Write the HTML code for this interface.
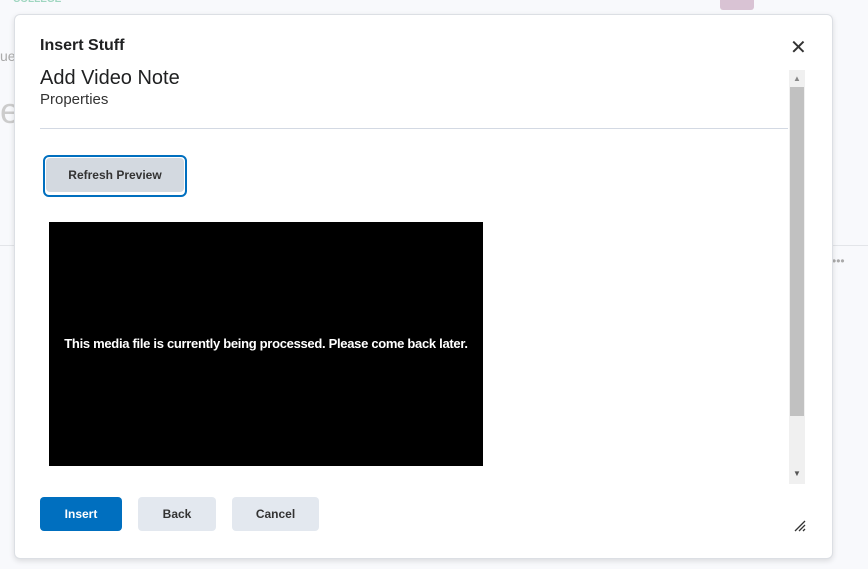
<!DOCTYPE html>
<html><head><style>
html,body{margin:0;width:868px;height:569px;overflow:hidden}
body{background:#f8f9fc;position:relative;font-family:"Liberation Sans",sans-serif;}
.a{position:absolute;white-space:nowrap}
.dlg{left:14px;top:14px;width:817px;height:543px;background:#fff;border:1px solid #dcdfe4;border-radius:6px;box-shadow:0 2px 6px rgba(0,0,0,.12)}
.btn{position:absolute;top:497px;height:34px;border-radius:4px;font-size:12px;font-weight:bold;line-height:34px;text-align:center;color:#333}
</style></head><body>
<div class="a" style="left:13px;top:-6px;font-size:10px;color:#9fd6c0;font-weight:bold">COLLEGE</div>
<div class="a" style="left:720px;top:-5px;width:34px;height:15px;background:#d9c3d4;border-radius:3px"></div>
<div class="a" style="left:0;top:48px;font-size:14px;color:#aaa">ue</div>
<div class="a" style="left:0;top:90px;font-size:36px;color:#ccc">e</div>
<div class="a" style="left:0;top:245px;width:868px;height:1px;background:#e3e5e9"></div>
<div class="a" style="left:832px;top:254px;color:#aaa;font-size:12px">•••</div>
<div class="a dlg"></div>
<div class="a" style="left:40px;top:37px;font-size:16px;font-weight:bold;color:#202122">Insert Stuff</div>
<div class="a" style="left:40px;top:67px;font-size:20px;color:#202122">Add Video Note</div>
<div class="a" style="left:40px;top:91px;font-size:15px;color:#333">Properties</div>
<div class="a" style="left:790px;top:35px;font-size:20px;color:#333">✕</div>
<div class="a" style="left:40px;top:128px;width:748px;height:1px;background:#d3d9e3"></div>
<div class="a" style="left:789px;top:70px;width:16px;height:414px;background:#f0f0f0"></div>
<div class="a" style="left:790px;top:87px;width:14px;height:329px;background:#c1c1c1"></div>
<div class="a" style="left:793px;top:74px;font-size:8px;color:#888">▲</div>
<div class="a" style="left:793px;top:469px;font-size:8px;color:#555">▼</div>
<div class="a" style="left:43px;top:155px;width:140px;height:38px;border:2px solid #006fbf;border-radius:6px;background:#fff"></div>
<div class="a" style="left:46px;top:158px;width:138px;height:34px;background:#d3d9e0;border-radius:4px;font-size:12px;font-weight:bold;color:#333;text-align:center;line-height:34px">Refresh Preview</div>
<div class="a" style="left:49px;top:222px;width:434px;height:244px;background:#000;color:#fff;font-size:13px;font-weight:bold;letter-spacing:-0.3px;text-align:center;line-height:244px">This media file is currently being processed. Please come back later.</div>
<div class="btn" style="left:40px;width:82px;background:#006fbf;color:#fff">Insert</div>
<div class="btn" style="left:138px;width:78px;background:#e3e8ef">Back</div>
<div class="btn" style="left:232px;width:87px;background:#e3e8ef">Cancel</div>
<svg class="a" style="left:794px;top:520px" width="12" height="12"><path d="M1 11L11 1M5 11L11 5M9 11L11 9" stroke="#333" stroke-width="1.3"/></svg>
</body></html>
